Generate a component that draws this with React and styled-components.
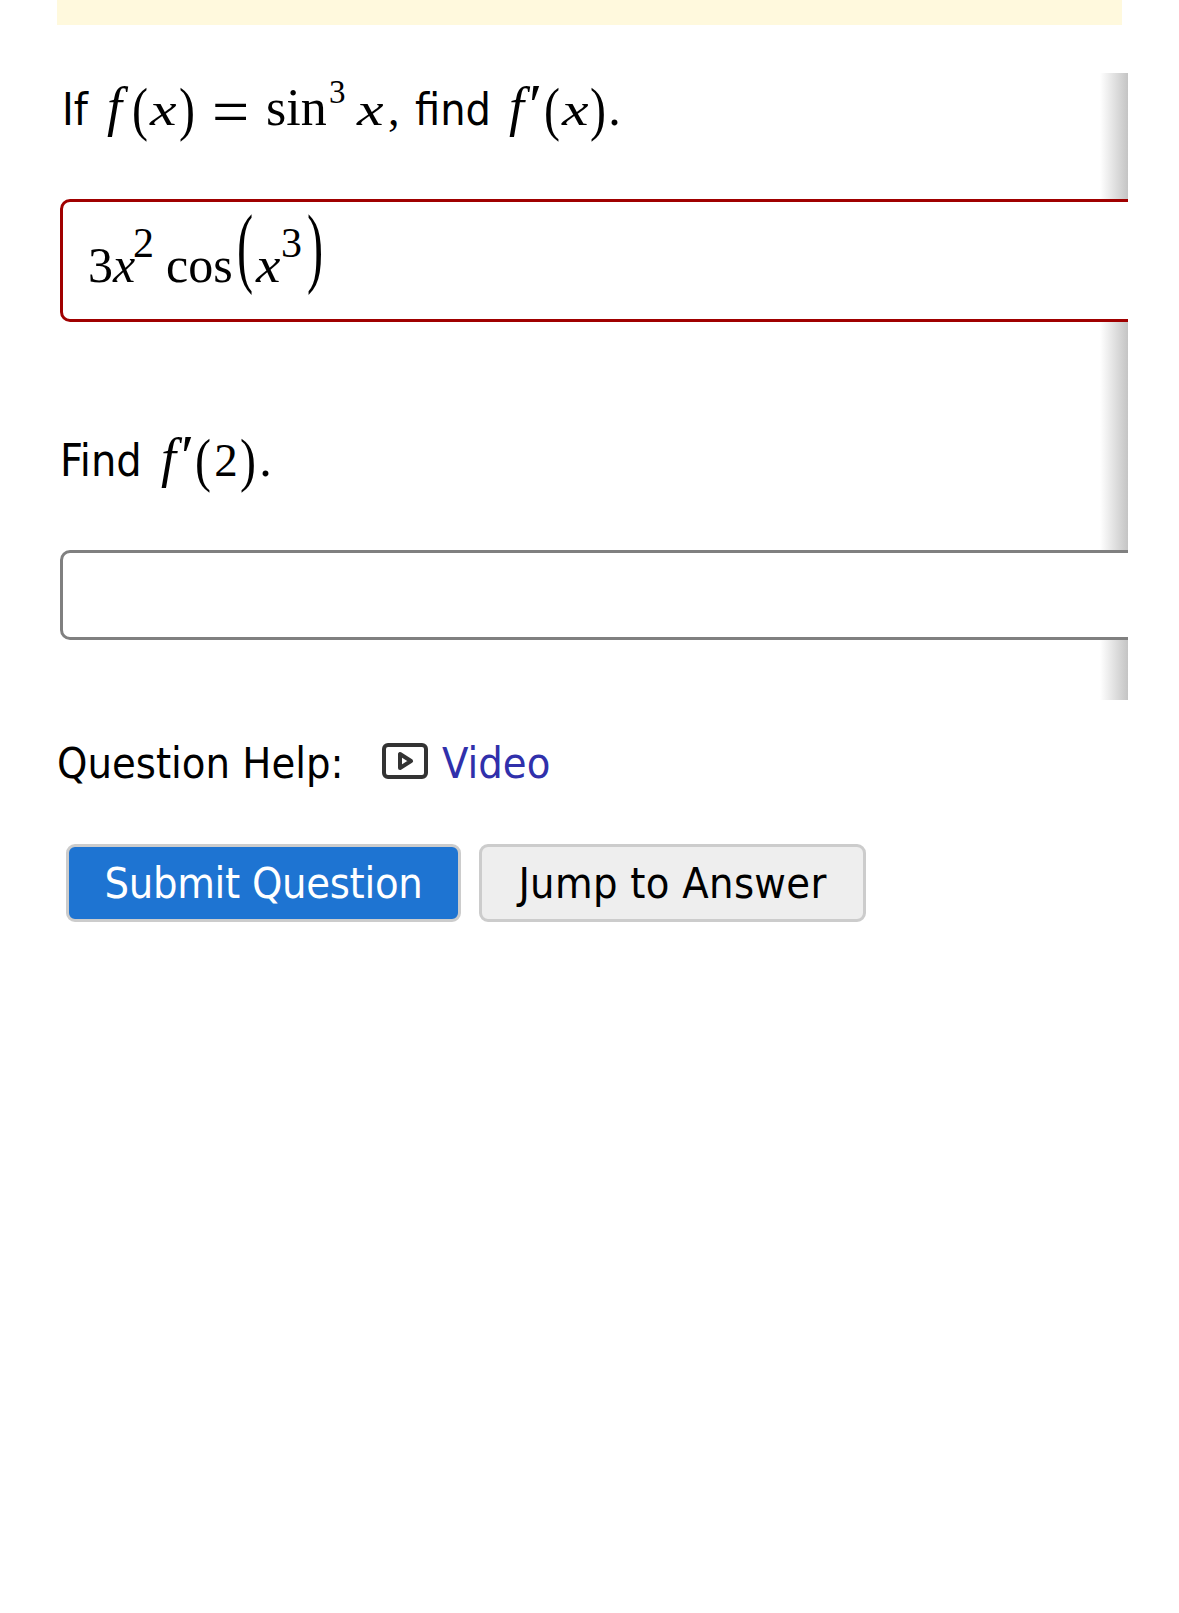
import React from "react";
import styled, { createGlobalStyle } from "styled-components";

const GlobalStyle = createGlobalStyle`
  html, body { margin: 0; padding: 0; background: #fff; }
  body { font-family: "DejaVu Sans", "Liberation Sans", sans-serif; font-stretch: condensed; color: #000; }
`;

const Page = styled.div`
  width: 1179px;
  height: 1613px;
  overflow: hidden;
`;
const Notice = styled.div`
  height: 25px;
  margin: 0 57px;
  background: #fff9dd;
`;
const QuestionArea = styled.div`
  width: 1071px;
  height: 627px;
  margin: 48px 0 0 57px;
  padding-left: 3px;
  box-sizing: border-box;
  overflow: hidden;
  background: linear-gradient(to right, rgba(196, 196, 196, 0), #c4c4c4) right top / 28px 100% no-repeat;
`;
const Line = styled.div`
  height: ${(p) => p.$h}px;
  line-height: ${(p) => p.$h}px;
  font-size: 44.5px;
  white-space: nowrap;
  margin-bottom: ${(p) => p.$mb || 0}px;
`;
const Word = styled.span`
  display: inline-block;
  margin-left: ${(p) => p.$ml || 0}px;
  width: ${(p) => p.$w}px;
`;
const Serif = styled.span`
  display: inline-block;
  font-family: "Liberation Serif", serif;
  font-stretch: normal;
  font-size: ${(p) => p.$size || 46}px;
  font-style: ${(p) => (p.$italic ? "italic" : "normal")};
  margin-left: ${(p) => p.$ml || 0}px;
  width: ${(p) => (p.$w ? `${p.$w}px` : "auto")};
  transform-origin: left bottom;
  transform: ${(p) => (p.$sx ? `scaleX(${p.$sx})` : "none")};
`;
const Sup = styled(Serif)`
  vertical-align: ${(p) => p.$raise}px;
  line-height: 0;
`;
const Paren = styled(Serif)`
  line-height: 0;
  vertical-align: ${(p) => p.$shift || 0}px;
`;
const InputBox = styled.div`
  box-sizing: border-box;
  width: 1100px;
  height: ${(p) => p.$h}px;
  padding: 5px 0 0 25px;
  line-height: ${(p) => p.$h - 6}px;
  background: #fff;
  border: 3px solid ${(p) => (p.$error ? "#a00000" : "#808080")};
  border-radius: 10px;
  white-space: nowrap;
  margin-bottom: ${(p) => p.$mb || 0}px;
`;
const HelpRow = styled.div`
  display: flex;
  align-items: center;
  height: 60px;
  margin: 33px 0 0 57px;
  font-size: 43px;
`;
const HelpLabel = styled.span`
  width: 325px;
`;
const VideoIcon = styled.svg`
  width: 46px;
  height: 36px;
  margin: 0 14px 4px 0;
  flex: none;
`;
const VideoLink = styled.a`
  color: #3030ab;
  text-decoration: none;
`;
const Buttons = styled.div`
  display: flex;
  gap: 18px;
  margin: 51px 0 0 66px;
`;
const Button = styled.button`
  box-sizing: border-box;
  width: ${(p) => p.$w}px;
  height: 78px;
  padding: 0;
  font-family: inherit;
  font-stretch: condensed;
  font-size: 43px;
  letter-spacing: ${(p) => p.$track || 0}px;
  border: 3px solid #ccc;
  border-radius: 9px;
  background: ${(p) => (p.$primary ? "#1e74d2" : "#eee")};
  color: ${(p) => (p.$primary ? "#fff" : "#000")};
`;

export default function App() {
  return (
    <Page>
      <GlobalStyle />
      <Notice />
      <QuestionArea>
        <Line $h={68} $mb={58}>
          <Word $ml={2} $w={26}>If</Word>
          <Serif $italic $ml={19} $size={54} $w={25}>f</Serif>
          <Paren $size={60} $w={18} $sx={0.8} $shift={-4}>(</Paren>
          <Serif $italic $w={27} $sx={1.3}>x</Serif>
          <Paren $ml={2} $size={60} $w={18} $sx={0.8} $shift={-4}>)</Paren>
          <Paren $ml={15} $size={66} $w={36} $shift={-9}>=</Paren>
          <Serif $ml={18} $size={52} $w={61}>sin</Serif>
          <Sup $size={33} $raise={22} $ml={2} $w={17}>3</Sup>
          <Serif $italic $ml={11} $w={27} $sx={1.3}>x</Serif>
          <Serif $ml={4} $w={12}>,</Serif>
          <Word $ml={15} $w={73}>find</Word>
          <Serif $italic $ml={21} $size={54} $w={20}>f</Serif>
          <Sup $size={60} $raise={0}>′</Sup>
          <Paren $ml={2} $size={60} $w={18} $sx={0.8} $shift={-4}>(</Paren>
          <Serif $italic $w={27} $sx={1.3}>x</Serif>
          <Paren $ml={1} $size={60} $w={18} $sx={0.8} $shift={-4}>)</Paren>
          <Serif $size={50}>.</Serif>
        </Line>
        <InputBox $error $h={123} $mb={102}>
          <Serif $size={50} $w={25}>3</Serif>
          <Serif $italic $size={50} $w={20}>x</Serif>
          <Sup $size={42} $raise={25} $w={21}>2</Sup>
          <Serif $size={50} $ml={12} $w={64}>cos</Serif>
          <Paren $size={88} $ml={7} $w={16} $sx={0.55} $shift={6}>(</Paren>
          <Serif $italic $size={50} $ml={3} $w={25} $sx={1.1}>x</Serif>
          <Sup $size={42} $raise={25} $w={21}>3</Sup>
          <Paren $size={88} $ml={5} $w={16} $sx={0.55} $shift={6}>)</Paren>
        </InputBox>
        <Line $h={68} $mb={58}>
          <Word $w={82}>Find</Word>
          <Serif $italic $ml={19} $size={54} $w={20}>f</Serif>
          <Sup $size={60} $raise={0}>′</Sup>
          <Paren $ml={1} $size={60} $w={18} $sx={0.8} $shift={-4}>(</Paren>
          <Serif $ml={1} $size={47} $w={24}>2</Serif>
          <Paren $ml={2} $size={60} $w={18} $sx={0.8} $shift={-4}>)</Paren>
          <Serif $ml={1} $size={50}>.</Serif>
        </Line>
        <InputBox $h={90} />
      </QuestionArea>
      <HelpRow>
        <HelpLabel>Question Help:</HelpLabel>
        <VideoIcon viewBox="0 0 46 36" fill="none" stroke="#333" strokeWidth="4">
          <rect x="2" y="2" width="42" height="32" rx="4" />
          <polygon points="18,11 18,25 29,18" strokeLinejoin="round" />
        </VideoIcon>
        <VideoLink href="#">Video</VideoLink>
      </HelpRow>
      <Buttons>
        <Button $primary $w={395} $track={-0.3}>Submit Question</Button>
        <Button $w={387} $track={0.3}>Jump to Answer</Button>
      </Buttons>
    </Page>
  );
}
